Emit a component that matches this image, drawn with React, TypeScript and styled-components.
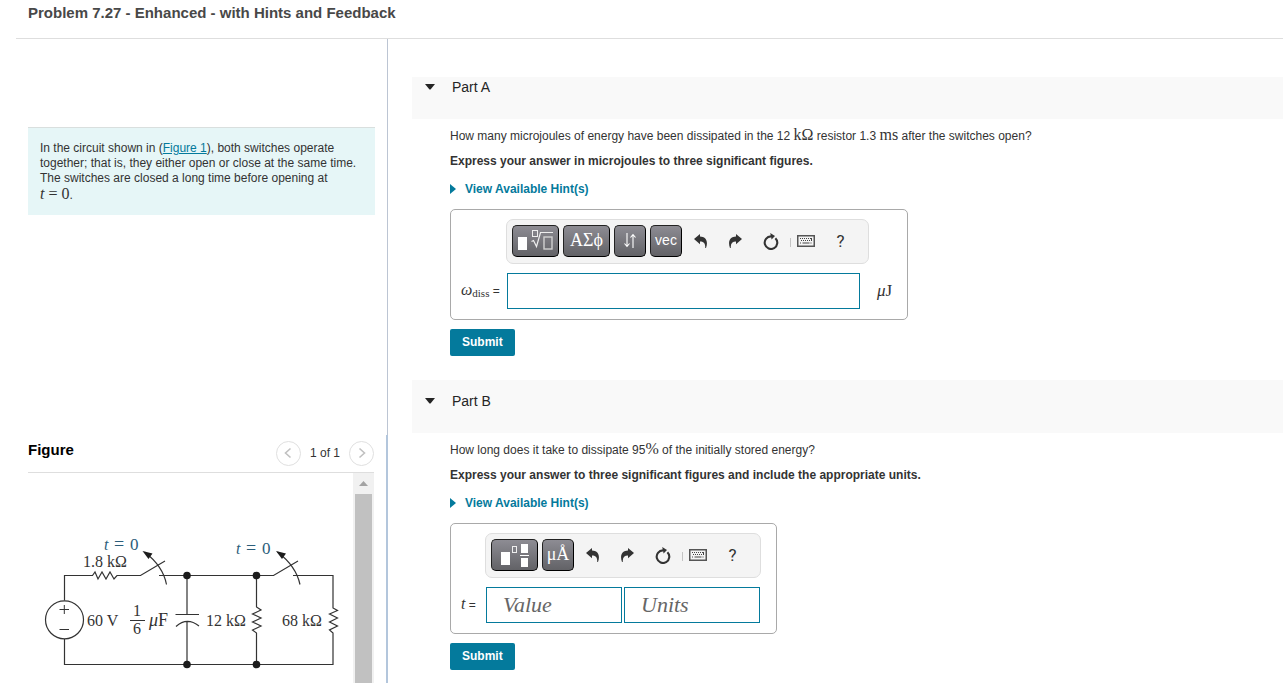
import React from "react";
import styled, { createGlobalStyle } from "styled-components";

const SERIF = '"Liberation Serif", "Times New Roman", serif';

const GlobalStyle = createGlobalStyle`
  * { box-sizing: border-box; }
  body {
    margin: 0;
    background: #fff;
    color: #333;
    font-family: "Liberation Sans", Arial, sans-serif;
    font-size: 12px;
    line-height: 15px;
  }
  button, input { font-family: inherit; margin: 0; }
`;

const Page = styled.div`
  display: flex;
  flex-direction: column;
  height: 100vh;
  overflow: hidden;
`;

const TitleBar = styled.header`
  flex: none;
  margin-left: 16px;
  padding: 3px 12px 15px;
  border-bottom: 1px solid #dedede;
`;

const Title = styled.h1`
  margin: 0;
  font-size: 15px;
  line-height: 20px;
  color: #484848;
`;

const Columns = styled.div`
  flex: 1;
  min-height: 0;
  display: flex;
`;

const LeftColumn = styled.aside`
  flex: none;
  width: 388px;
  display: flex;
  flex-direction: column;
`;

const Intro = styled.section`
  flex: 0 0 396px;
  padding: 88px 12px 0 28px;
  border-right: 1px solid #bcc5d3;
`;

const IntroText = styled.p`
  margin: 0;
  padding: 13px 12px 12px;
  border-top: 1px solid #d9dfde;
  background: #e6f6f7;
`;

const Link = styled.a`
  color: #047a9c;
`;

const Formula = styled.span`
  font-family: ${SERIF};
  font-size: 16px;
  line-height: 1;
  white-space: nowrap;
`;

const FigurePanel = styled.section`
  flex: 1;
  min-height: 0;
  display: flex;
  flex-direction: column;
  padding: 0 12px 0 28px;
  border-right: 2px solid #b3c6dc;
`;

const FigureHeader = styled.div`
  flex: none;
  display: flex;
  justify-content: space-between;
  height: 38px;
  padding-top: 5px;
  border-bottom: 1px solid #dedede;
`;

const FigureTitle = styled.h2`
  margin: 0;
  font-size: 15px;
  line-height: 20px;
  color: #000;
`;

const Pager = styled.div`
  display: flex;
  align-items: center;
  gap: 9px;
  height: 26px;
`;

const PagerButton = styled.button`
  display: flex;
  align-items: center;
  justify-content: center;
  width: 25px;
  height: 25px;
  padding: 0;
  border: 1px solid #e0e0e0;
  border-radius: 50%;
  background: #fff;
  color: #c0c0c0;
`;

const FigureView = styled.div`
  flex: 1;
  min-height: 0;
  display: flex;
  overflow: hidden;
`;

const CircuitBox = styled.div`
  flex: 1;
  min-width: 0;
  overflow: hidden;
`;

const ScrollTrack = styled.div`
  flex: none;
  width: 21px;
  display: flex;
  flex-direction: column;
  padding: 0 2px;
  background: #f1f1f1;
`;

const ScrollArrow = styled.div`
  flex: none;
  height: 21px;
  display: flex;
  align-items: center;
  justify-content: center;
`;

const ScrollThumb = styled.div`
  flex: 1;
  background: #c1c1c1;
`;

const Main = styled.main`
  flex: 1;
  min-width: 0;
  padding: 38px 0 0 24px;
  overflow: hidden;
`;

const PartHeader = styled.div<{ $tucked?: boolean }>`
  display: flex;
  align-items: center;
  gap: 17px;
  padding: ${(p) => (p.$tucked ? "0 13px 22px" : "11px 13px 22px")};
  background: #f9f9f9;
`;

const PartTitle = styled.h2`
  margin: 0;
  font-size: 14px;
  font-weight: 400;
  line-height: 20px;
  color: #252525;
`;

const PartBody = styled.div`
  padding: 8px 38px 24px;
  line-height: 18px;
`;

const Question = styled.p`
  height: 18px;
  margin: 0 0 7px;
  white-space: nowrap;
`;

const Instruction = styled.p`
  margin: 0 0 10px;
  font-weight: 700;
`;

const HintToggle = styled.button`
  display: flex;
  align-items: center;
  gap: 9px;
  margin: 0 0 11px;
  padding: 0;
  border: 0;
  background: none;
  color: #047a9c;
  font-size: 12px;
  font-weight: 700;
  line-height: 18px;
`;

const AnswerBox = styled.div<{ $labelWidth: number }>`
  display: grid;
  grid-template-columns: ${(p) => p.$labelWidth}px auto;
  width: fit-content;
  row-gap: 9px;
  padding: 9px 15px 10px 10px;
  border: 1px solid #a9a9a9;
  border-radius: 5px;
`;

const Toolbar = styled.div`
  grid-column: 2;
  justify-self: start;
  display: flex;
  align-items: flex-start;
  gap: 2px;
  height: 45px;
  padding: 5px 9px 0 5px;
  border: 1px solid #dedede;
  border-radius: 7px;
  background: #f4f4f4;
`;

const Palettes = styled.div`
  display: flex;
  gap: 4px;
`;

const PaletteButton = styled.button<{ $wide?: boolean; $serif?: boolean }>`
  display: flex;
  align-items: center;
  justify-content: center;
  width: ${(p) => (p.$wide ? 47 : 32)}px;
  height: 32px;
  padding: 0 0 2px;
  border: 1px solid #222;
  border-right-color: #000;
  border-bottom-color: #000;
  border-radius: 5px;
  background: linear-gradient(#8d8c93, #626266);
  color: #fff;
  font-family: ${(p) => (p.$serif ? SERIF : "inherit")};
  font-size: ${(p) => (p.$serif ? 18 : 14)}px;
`;

const Tools = styled.div`
  display: flex;
`;

const ToolButton = styled.button<{ $divided?: boolean }>`
  position: relative;
  display: flex;
  align-items: center;
  justify-content: center;
  width: 35px;
  height: 32px;
  padding: 0 2px 0 0;
  border: 0;
  background: none;
  color: #333;
  font-family: Roboto, sans-serif;
  font-size: 17px;

  &::before {
    content: "";
    display: ${(p) => (p.$divided ? "block" : "none")};
    position: absolute;
    left: 1px;
    top: 13px;
    width: 1px;
    height: 9px;
    background: #c4c4c4;
  }
`;

const FieldLabel = styled.label`
  align-self: center;
  font-size: 12px;
  line-height: 18px;
  white-space: nowrap;

  sub {
    font-size: 11px;
    line-height: 1;
    vertical-align: -2px;
  }
`;

const FieldRow = styled.div`
  display: flex;
  align-items: center;
  gap: 2px;
  padding-left: 1px;
`;

const Field = styled.input<{ $wide?: boolean }>`
  width: ${(p) => (p.$wide ? 353 : 136)}px;
  height: 36px;
  padding: 0 16px;
  border: 1px solid #047a9c;
  border-radius: 0;
  background: #fff;
  font-family: ${SERIF};
  font-size: 22px;

  &::placeholder {
    color: #666;
    font-style: italic;
    opacity: 1;
  }
`;

const Unit = styled.span`
  margin-left: 15px;
  font-family: ${SERIF};
  font-size: 17px;
`;

const Submit = styled.button`
  display: block;
  margin-top: 9px;
  padding: 0 12px 2px;
  height: 27px;
  border: 0;
  border-radius: 2px;
  background: #047a9c;
  color: #fff;
  font-size: 12px;
  font-weight: 700;
`;

const Caret = () => (
  <svg width="10" height="6" viewBox="0 0 10 6" aria-hidden="true">
    <path d="M0 0H10L5.5 5.5H4.5Z" fill="#252525" />
  </svg>
);

const HintArrow = () => (
  <svg width="6" height="10" viewBox="0 0 6 10" aria-hidden="true">
    <path d="M0 0L6 5L0 10Z" fill="#047a9c" />
  </svg>
);

const Chevron = ({ right }: { right?: boolean }) => (
  <svg width="8" height="12" viewBox="0 0 8 12" fill="none" stroke="currentColor" strokeWidth="1.6">
    <path d={right ? "M1.5 1.5L6.5 6L1.5 10.5" : "M6.5 1.5L1.5 6L6.5 10.5"} />
  </svg>
);

const UndoPath = "M0 5L6 0V2.6C11.6 2.8 14.6 7 12 14H11.2C11.600 9.800 9.600 7.600 6 7.600V10.200Z";

const UndoIcon = () => (
  <svg width="13" height="15" viewBox="0 0 13 15">
    <path d={UndoPath} fill="currentColor" />
  </svg>
);

const RedoIcon = () => (
  <svg width="13" height="15" viewBox="0 0 13 15">
    <path d={UndoPath} transform="translate(13 0) scale(-1 1)" fill="currentColor" />
  </svg>
);

const ResetIcon = () => (
  <svg width="16" height="17" viewBox="0 0 16 17">
    <path d="M8 3.400A6.300 6.300 0 1 0 12.400 5.200" fill="none" stroke="currentColor" strokeWidth="2.100" />
    <path d="M7.200 0L12 3L8.600 6.400Z" fill="currentColor" />
  </svg>
);

const KeyboardIcon = () => (
  <svg width="18" height="12" viewBox="0 0 18 12">
    <rect x=".75" y=".75" width="16.5" height="10.5" fill="#f4f4f4" stroke="#555" strokeWidth="1.500" />
    <path d="M3 3.500H14M4 5.500H13M3 8H4.500M13.500 8H15" stroke="#444" strokeDasharray="1 1" />
    <path d="M5.500 8H12.500M14.500 3V6" stroke="#444" />
  </svg>
);

const RootIcon = () => (
  <svg width="37" height="22" viewBox="0 0 37 22" fill="none">
    <rect x="1" y="8" width="9" height="13" fill="#fff" />
    <rect x="15.500" y="1.500" width="5" height="6" stroke="#eee" />
    <path d="M14.500 12.500L16.500 11.500L19.500 17.500L23.500 3.500H36" stroke="#eee" strokeWidth="1.200" />
    <rect x="27" y="8" width="8" height="12" stroke="#d0d0d0" strokeWidth="1.400" />
  </svg>
);

const FractionIcon = () => (
  <svg width="30" height="26" viewBox="0 0 30 26" fill="none">
    <rect x="1" y="11" width="9" height="13" fill="#fff" />
    <rect x="12.500" y="5.500" width="4" height="6" stroke="#eee" />
    <rect x="21" y="3" width="7" height="9" fill="#fff" />
    <path d="M20 14.500H29" stroke="#fff" />
    <rect x="21" y="17" width="7" height="9" fill="#fff" />
  </svg>
);

const ArrowsIcon = () => (
  <svg width="12" height="15" viewBox="0 0 12 15" fill="none" stroke="#fff" strokeWidth="1.100">
    <path d="M3 0V13.500M.5 10.500L3 13.500L5.500 10.500M9 15V1.500M6.500 4.500L9 1.500L11.500 4.500" />
  </svg>
);

const SwitchTime = ({ x, y }: { x: number; y: number }) => (
  <g fill="#2b5d7a">
    <text x={x} y={y} fontStyle="italic">t</text>
    <text x={x + 10} y={y} fontSize="18">=</text>
    <text x={x + 26} y={y} fontSize="17">0</text>
  </g>
);

const Circuit = () => (
  <svg width="325" height="210" viewBox="28 473 325 210" fontFamily={SERIF} fontSize="16" fill="#333" role="img" aria-label="Circuit diagram">
    <g fill="none" stroke="#333" strokeWidth="1.200">
      <path d="M64.500 600.500V575.500H92.500L95 572L98 579L102 572L106 579L110 572L114 579L117 575.500H140.500L165 561" />
      <path d="M144.500 552Q163 566 166.500 584.500M277.500 552Q296 566 300 584.500" />
      <path d="M159 575.500H273.500L298 561M293 575.500H333V608L337.500 610.500L329.500 614L337.500 618L329.500 622L337.500 626L329.500 630L333 633V664.500H64.500V639" />
      <path d="M256.500 575.500V607L261 610L252.500 614L261 618L252.500 622L261 626L252.500 630L256.500 633V664.500" />
      <path d="M187 575.500V614.500M175.500 614.500H199M176 626.500Q187 616.500 199 626M187 621.500V664.500" />
      <circle cx="64.500" cy="619.800" r="19" />
      <path d="M59.500 609.500H69M64.300 605V614M59.500 629.500H69" strokeWidth="1" />
      <path d="M130 620.500H145" strokeWidth="1" />
    </g>
    <g fill="#1c1c1c">
      <path d="M142.500 551L152.500 553.500L148.500 559ZM276 551L286 553.500L282 559Z" />
      <circle cx="187" cy="575.500" r="3.800" />
      <circle cx="256.500" cy="575.500" r="3.800" />
      <circle cx="187" cy="664.500" r="3.800" />
      <circle cx="256.500" cy="664.500" r="3.800" />
    </g>
    <SwitchTime x={104} y={550} />
    <SwitchTime x={236} y={554} />
    <text x="83" y="567">1.8 kΩ</text>
    <text x="87" y="626">60 V</text>
    <text x="133" y="616">1</text>
    <text x="133" y="634">6</text>
    <text x="149" y="626" fontSize="18"><tspan fontStyle="italic">μ</tspan>F</text>
    <text x="206" y="626">12 kΩ</text>
    <text x="282" y="626">68 kΩ</text>
  </svg>
);

const EditingTools = () => (
  <Tools>
    <ToolButton type="button" aria-label="Undo"><UndoIcon /></ToolButton>
    <ToolButton type="button" aria-label="Redo"><RedoIcon /></ToolButton>
    <ToolButton type="button" aria-label="Reset"><ResetIcon /></ToolButton>
    <ToolButton type="button" aria-label="Keyboard shortcuts" $divided><KeyboardIcon /></ToolButton>
    <ToolButton type="button" aria-label="Help">?</ToolButton>
  </Tools>
);

const Hints = () => (
  <HintToggle type="button"><HintArrow />View Available Hint(s)</HintToggle>
);

export default function App() {
  return (
    <Page>
      <GlobalStyle />
      <TitleBar>
        <Title>Problem 7.27 - Enhanced - with Hints and Feedback</Title>
      </TitleBar>
      <Columns>
        <LeftColumn>
          <Intro>
            <IntroText>
              In the circuit shown in (<Link href="#figure">Figure 1</Link>), both switches operate together; that is, they
              either open or close at the same time. The switches are closed a long time before opening at
              <br />
              <Formula><i>t</i> = 0</Formula>.
            </IntroText>
          </Intro>
          <FigurePanel id="figure">
            <FigureHeader>
              <FigureTitle>Figure</FigureTitle>
              <Pager>
                <PagerButton type="button" aria-label="Previous figure"><Chevron /></PagerButton>
                <span>1 of 1</span>
                <PagerButton type="button" aria-label="Next figure"><Chevron right /></PagerButton>
              </Pager>
            </FigureHeader>
            <FigureView>
              <CircuitBox><Circuit /></CircuitBox>
              <ScrollTrack>
                <ScrollArrow>
                  <svg width="9" height="5" viewBox="0 0 9 5"><path d="M0 5L4.500 0L9 5Z" fill="#a3a3a3" /></svg>
                </ScrollArrow>
                <ScrollThumb />
              </ScrollTrack>
            </FigureView>
          </FigurePanel>
        </LeftColumn>
        <Main>
          <section>
            <PartHeader $tucked><Caret /><PartTitle>Part A</PartTitle></PartHeader>
            <PartBody>
              <Question>
                How many microjoules of energy have been dissipated in the 12 <Formula>kΩ</Formula> resistor 1.3{" "}
                <Formula>ms</Formula> after the switches open?
              </Question>
              <Instruction>Express your answer in microjoules to three significant figures.</Instruction>
              <Hints />
              <AnswerBox $labelWidth={45}>
                <Toolbar>
                  <Palettes>
                    <PaletteButton type="button" $wide aria-label="Templates"><RootIcon /></PaletteButton>
                    <PaletteButton type="button" $wide $serif>ΑΣϕ</PaletteButton>
                    <PaletteButton type="button" aria-label="Arrows"><ArrowsIcon /></PaletteButton>
                    <PaletteButton type="button">vec</PaletteButton>
                  </Palettes>
                  <EditingTools />
                </Toolbar>
                <FieldLabel htmlFor="energy">
                  <Formula><i>ω</i><sub>diss</sub></Formula> =
                </FieldLabel>
                <FieldRow>
                  <Field id="energy" $wide />
                  <Unit><i>μ</i>J</Unit>
                </FieldRow>
              </AnswerBox>
              <Submit type="button">Submit</Submit>
            </PartBody>
          </section>
          <section>
            <PartHeader><Caret /><PartTitle>Part B</PartTitle></PartHeader>
            <PartBody>
              <Question>
                How long does it take to dissipate 95<Formula>%</Formula> of the initially stored energy?
              </Question>
              <Instruction>Express your answer to three significant figures and include the appropriate units.</Instruction>
              <Hints />
              <AnswerBox $labelWidth={24}>
                <Toolbar>
                  <Palettes>
                    <PaletteButton type="button" $wide aria-label="Templates"><FractionIcon /></PaletteButton>
                    <PaletteButton type="button" $serif>μÅ</PaletteButton>
                  </Palettes>
                  <EditingTools />
                </Toolbar>
                <FieldLabel htmlFor="time"><Formula><i>t</i></Formula> =</FieldLabel>
                <FieldRow>
                  <Field id="time" placeholder="Value" />
                  <Field aria-label="Units" placeholder="Units" />
                </FieldRow>
              </AnswerBox>
              <Submit type="button">Submit</Submit>
            </PartBody>
          </section>
        </Main>
      </Columns>
    </Page>
  );
}
